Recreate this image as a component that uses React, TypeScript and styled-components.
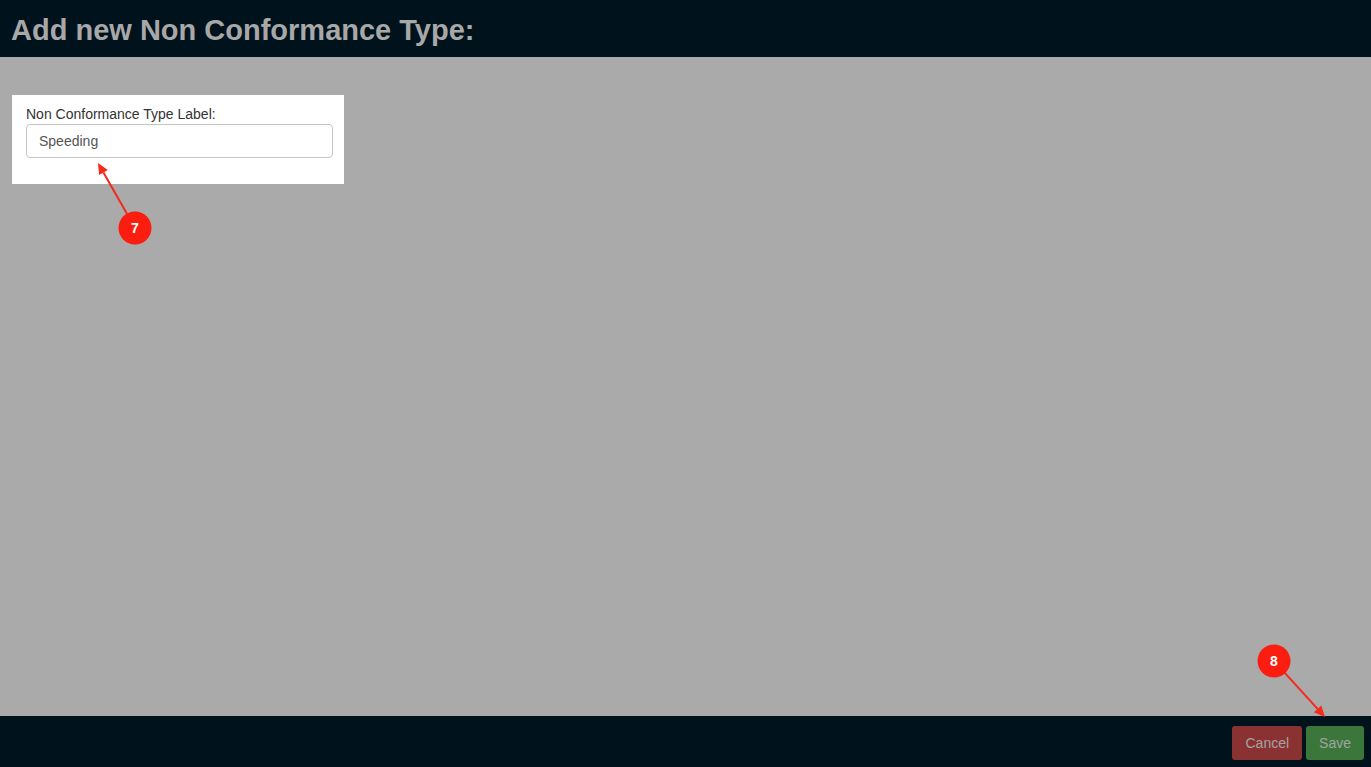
import React from "react";
import styled, { createGlobalStyle } from "styled-components";

const GlobalStyle = createGlobalStyle`
    html, body {
        margin: 0;
        padding: 0;
        background: #aaaaaa;
        font-family: "Liberation Sans", Arial, sans-serif;
    }
`;

const Page = styled.div`
    position: relative;
    display: flex;
    flex-direction: column;
    width: 100%;
    height: 767px;
    background-color: #aaaaaa;
    overflow: hidden;
`;

const Header = styled.header`
    display: flex;
    align-items: center;
    height: 57px;
    padding: 4px 11px 0;
    box-sizing: border-box;
    background-color: #00131d;
`;

const Title = styled.h1`
    margin: 0;
    font-size: 29px;
    font-weight: 700;
    color: #a8a8a8;
    letter-spacing: 0;
`;

const Main = styled.main`
    flex: 1;
    padding: 38px 12px;
`;

const Card = styled.div`
    width: 332px;
    height: 89px;
    box-sizing: border-box;
    padding: 10px 11px 0 14px;
    background-color: #ffffff;
`;

const Label = styled.label`
    display: block;
    font-size: 14px;
    color: #333333;
    line-height: 18px;
    margin-bottom: 1px;
`;

const Input = styled.input`
    display: block;
    width: 307px;
    height: 34px;
    box-sizing: border-box;
    padding: 0 12px;
    border: 1px solid #c4c4c4;
    border-radius: 4px;
    font-family: "Liberation Sans", Arial, sans-serif;
    font-size: 14px;
    color: #555555;
    background: #ffffff;
    outline: none;
`;

const Footer = styled.footer`
    display: flex;
    justify-content: flex-end;
    align-items: flex-start;
    gap: 4px;
    height: 51px;
    padding: 10px 7px 0 0;
    box-sizing: border-box;
    background-color: #00131d;
`;

const Button = styled.button<{ $tone: "cancel" | "save" }>`
    height: 34px;
    padding: 0 13px;
    border: none;
    border-radius: 3px;
    font-family: "Liberation Sans", Arial, sans-serif;
    font-size: 14px;
    color: #a3a3a3;
    background-color: ${(p) => (p.$tone === "cancel" ? "#8a3232" : "#3b773b")};
    cursor: pointer;
`;

const Overlay = styled.svg`
    position: absolute;
    top: 0;
    left: 0;
    pointer-events: none;
`;

const Marker = ({ cx, cy, tx, ty, n }: { cx: number; cy: number; tx: number; ty: number; n: string }) => {
    const dx = tx - cx;
    const dy = ty - cy;
    const len = Math.sqrt(dx * dx + dy * dy);
    const ux = dx / len;
    const uy = dy / len;
    const sx = cx + ux * 16;
    const sy = cy + uy * 16;
    const bx = tx - ux * 11;
    const by = ty - uy * 11;
    const px = -uy * 5;
    const py = ux * 5;
    return (
        <g>
            <line x1={sx} y1={sy} x2={bx} y2={by} stroke="#f5291c" strokeWidth={2} />
            <polygon points={`${tx},${ty} ${bx + px},${by + py} ${bx - px},${by - py}`} fill="#f5291c" />
            <circle cx={cx} cy={cy} r={16.5} fill="#fb1d10" />
            <text
                x={cx}
                y={cy + 5}
                textAnchor="middle"
                fontSize="14"
                fontWeight="700"
                fill="#ffffff"
                fontFamily="Liberation Sans, Arial, sans-serif"
            >
                {n}
            </text>
        </g>
    );
};

const App = () => {
    return (
        <>
            <GlobalStyle />
            <Page>
                <Header>
                    <Title>Add new Non Conformance Type:</Title>
                </Header>
                <Main>
                    <Card>
                        <Label htmlFor="nct-label">Non Conformance Type Label:</Label>
                        <Input id="nct-label" defaultValue="Speeding" />
                    </Card>
                </Main>
                <Footer>
                    <Button $tone="cancel">Cancel</Button>
                    <Button $tone="save">Save</Button>
                </Footer>
                <Overlay width={1371} height={767}>
                    <Marker cx={135} cy={228} tx={98} ty={163} n="7" />
                    <Marker cx={1274} cy={661} tx={1325} ty={717} n="8" />
                </Overlay>
            </Page>
        </>
    );
};

export default App;
